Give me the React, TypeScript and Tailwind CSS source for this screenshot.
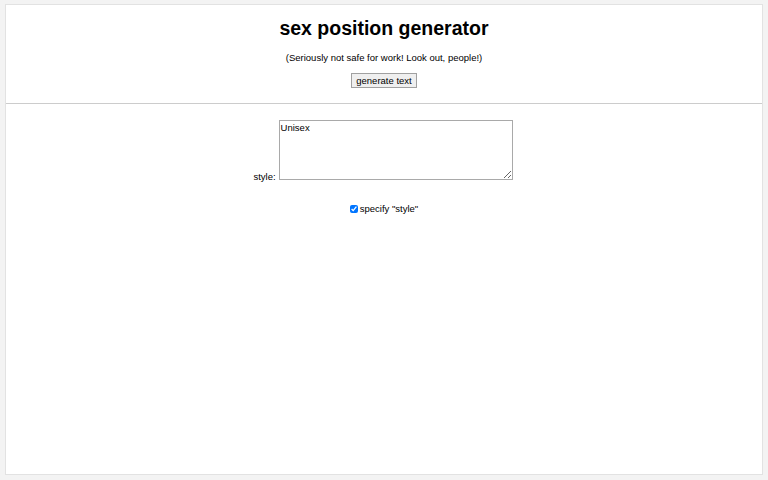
export default function App() {
  return (
    <div className="min-h-screen bg-[#f3f3f3] px-[5px] pt-[4px]" style={{ fontFamily: '"Liberation Sans", Arial, sans-serif' }}>
      <div className="h-[471px] bg-white border border-[#e2e2e2] text-black">
        <div className="flex flex-col items-center pt-[11px] pb-[15px] border-b border-[#cccccc]">
          <h1 className="text-[19.5px] leading-[24px] font-bold">sex position generator</h1>
          <p className="mt-[12px] text-[9.5px] leading-[12px]">(Seriously not safe for work! Look out, people!)</p>
          <button className="mt-[9px] h-[15px] px-[4px] text-[9.5px] leading-[12px] bg-[#efefef] border border-[#a0a0a0]">
            generate text
          </button>
        </div>
        <div className="flex flex-col items-center pt-[16px]">
          <div className="flex items-end pr-[2px]">
            <label className="text-[9.5px] leading-[12px] mr-[3px] mb-[-3px]">style:</label>
            <textarea
              defaultValue="Unisex"
              className="w-[234px] h-[60px] border border-[#a9a9a9] px-[1px] py-[1px] text-[9.5px] leading-[12px] resize"
            />
          </div>
          <label className="mt-[23px] flex items-center text-[9.5px] leading-[12px]">
            <input type="checkbox" defaultChecked className="w-[8px] h-[8px] mr-[2px]" />
            specify "style"
          </label>
        </div>
      </div>
    </div>
  )
}
